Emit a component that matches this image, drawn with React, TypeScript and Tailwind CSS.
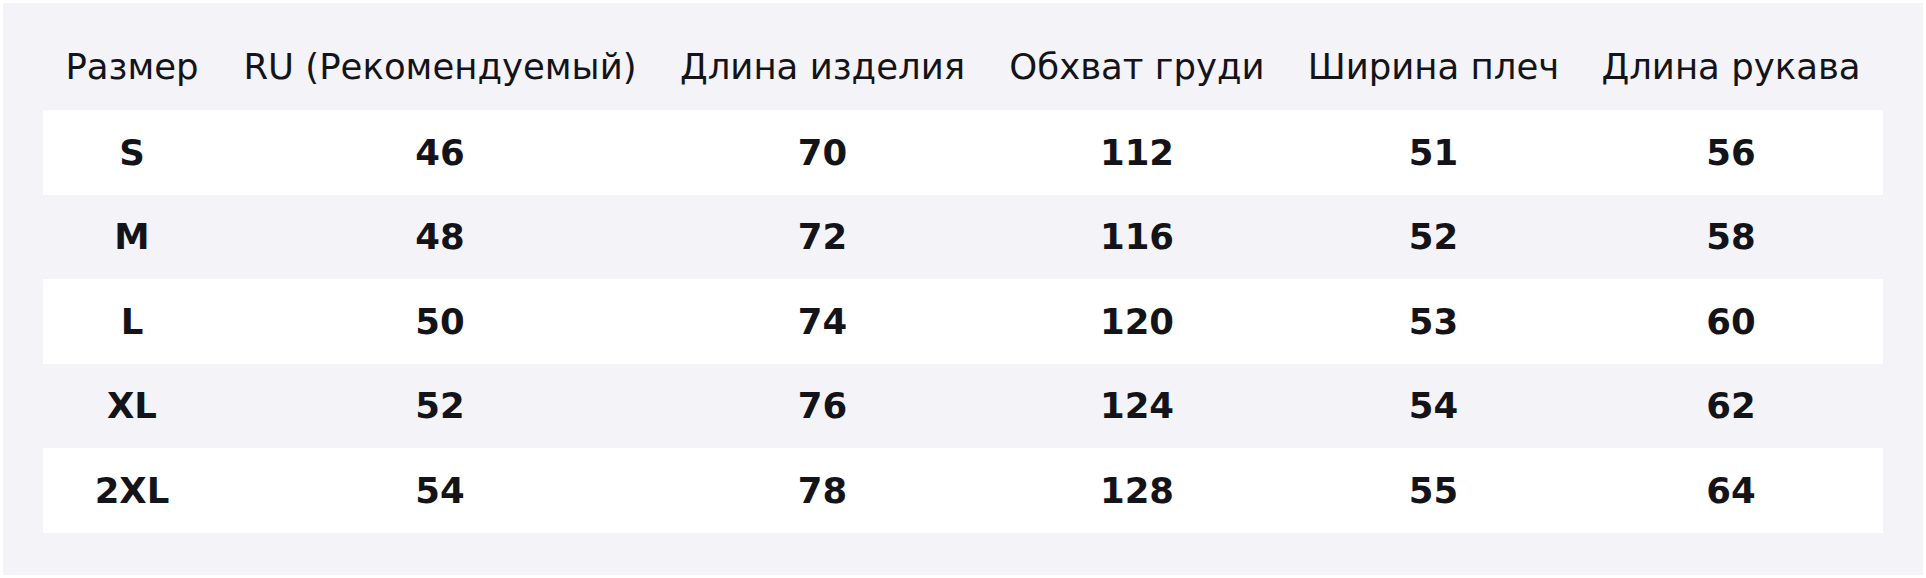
const headers = [
  'Размер',
  'RU (Рекомендуемый)',
  'Длина изделия',
  'Обхват груди',
  'Ширина плеч',
  'Длина рукава',
];

// column widths taken from the reference, sum = 1840
const colWidths = ['w-[178px]', 'w-[438px]', 'w-[327px]', 'w-[302px]', 'w-[291px]', 'w-[304px]'];

const rows = [
  ['S', '46', '70', '112', '51', '56'],
  ['M', '48', '72', '116', '52', '58'],
  ['L', '50', '74', '120', '53', '60'],
  ['XL', '52', '76', '124', '54', '62'],
  ['2XL', '54', '78', '128', '55', '64'],
];

export default function App() {
  return (
    <div className="bg-white p-[3px] w-[1926px] h-[578px] font-['DejaVu_Sans',sans-serif]">
      <div className="bg-[#f3f3f8] w-[1920px] h-[572px] px-[40px] pt-[40px] pb-[42px]">
        <table className="w-[1840px] table-fixed border-collapse text-[#141418]">
          <colgroup>
            {colWidths.map((w, i) => (
              <col key={i} className={w} />
            ))}
          </colgroup>
          <thead>
            <tr className="h-[67px]">
              {headers.map((h) => (
                <th
                  key={h}
                  className="px-0 pt-[3px] pb-0 align-top text-center text-[35.5px] font-normal leading-[1.164] whitespace-nowrap"
                >
                  {h}
                </th>
              ))}
            </tr>
          </thead>
          <tbody>
            {rows.map((r, i) => (
              <tr key={r[0]} className={`h-[84.6px] ${i % 2 === 0 ? 'bg-white' : ''}`}>
                {r.map((c, j) => (
                  <td
                    key={j}
                    className="px-0 py-0 align-middle text-center text-[35.5px] font-bold leading-[1.164]"
                  >
                    {c}
                  </td>
                ))}
              </tr>
            ))}
          </tbody>
        </table>
      </div>
    </div>
  );
}
